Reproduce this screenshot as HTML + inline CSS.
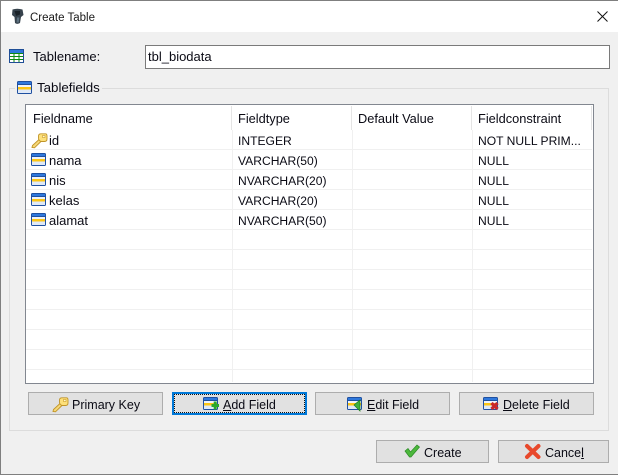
<!DOCTYPE html>
<html>
<head>
<meta charset="utf-8">
<style>
html,body{margin:0;padding:0;}
body{width:618px;height:475px;overflow:hidden;background:#f0f0f0;font-family:"Liberation Sans",sans-serif;font-size:12.5px;color:#0a0a14;position:relative;}
.l{position:absolute;}
.btn{position:absolute;background:#e1e1e1;border:1px solid #adadad;box-sizing:border-box;height:23px;}
.t{position:absolute;white-space:nowrap;line-height:16px;}
.h{font-size:12.800px;top:111px;}
svg{position:absolute;overflow:visible;}
</style>
</head>
<body>
<svg width="0" height="0" style="position:absolute">
<defs>
<g id="fld">
<rect x=".5" y=".5" width="14" height="12" rx="1" fill="#fff" stroke="#1f50a0"/>
<rect x="1" y="1" width="13" height="2" fill="#2f78dc"/>
<rect x="1" y="3" width="13" height="1" fill="#1f50a0"/>
<rect x="1" y="4" width="13" height="2" fill="#eef3fb"/>
<rect x="1" y="6" width="13" height="2.500" fill="#fcc514"/>
<rect x="1" y="8.500" width="13" height="3.500" fill="#dfe9f7"/>
</g>
<g id="key">
<path d="M1 14.500 L1.500 12.500 L8 6.500 L10 8.500 L3.500 14.800 Z" fill="#f6d878" stroke="#c09428" stroke-width=".9"/>
<path d="M7.500 3 Q7.500 .8 10 .8 L14.500 .8 Q16 .8 16 3 L16 6 Q16 8.500 13.500 8.500 L10.500 8.500 Q7.500 8 7.500 5 Z" fill="#fde07a" stroke="#c09428" stroke-width=".9"/>
<rect x="11.500" y="2.500" width="2.500" height="2" fill="#fff8d0" stroke="#c89a2a" stroke-width=".6"/>
</g>
</defs>
</svg>

<!-- window frame -->
<div class="l" style="left:0;top:0;width:618px;height:32px;background:#fff"></div>
<div class="l" style="left:0;top:0;width:618px;height:1px;background:#7f7f7f"></div>
<div class="l" style="left:0;top:0;width:1px;height:475px;background:#7f7f7f"></div>
<div class="l" style="left:0;top:474px;width:618px;height:1px;background:#7f7f7f"></div>

<!-- title icon -->
<svg style="left:11px;top:8px" width="14" height="17" viewBox="0 0 14 17">
<path d="M1.500 1.500 Q6 0 11.500 1.500 L12.500 7 L10 9 L9 15 Q6 16.800 4 15 L3.500 9 L1 7 Z" fill="#36424c"/>
<path d="M3.500 3 L9 3 L9 6.500 L5 8Z" fill="#1a2228"/>
<path d="M6 9.500 L8.300 9.500 L7.800 14.500 L5.500 14.500Z" fill="#5d7180"/>
</svg>
<div class="t" style="left:30px;top:10px;font-size:11.500px;color:#1a1a1a">Create Table</div>
<svg style="left:597px;top:11px" width="11" height="11" viewBox="0 0 11 11"><path d="M.5 .5 L10.500 10.500 M10.500 .5 L.5 10.500" stroke="#111" stroke-width="1" fill="none"/></svg>

<!-- Tablename -->
<svg style="left:9px;top:49px" width="15" height="14" viewBox="0 0 15 14">
<rect x=".5" y=".5" width="14" height="13" fill="#fff" stroke="#1f4e96"/>
<rect x="1" y="1" width="13" height="3" fill="#2f78dc"/>
<path d="M1 4.500H14M1 7.500H14M1 10.500H14M5 4V13M10 4V13" stroke="#0c8a12" stroke-width="1" fill="none"/>
<rect x=".5" y=".5" width="14" height="13" fill="none" stroke="#1f4e96"/>
</svg>
<div class="t" style="left:33px;top:49px;font-size:13px">Tablename:</div>
<div class="l" style="left:145px;top:45px;width:465px;height:24px;box-sizing:border-box;background:#fff;border:1px solid #7a7a7a"></div>
<div class="t" style="left:148px;top:49px;font-size:13px">tbl_biodata</div>

<!-- group -->
<div class="l" style="left:9px;top:88px;width:600px;height:343px;box-sizing:border-box;border:1px solid #dcdcdc"></div>
<div class="l" style="left:15px;top:80px;width:87px;height:16px;background:#f0f0f0"></div>
<svg style="left:17px;top:81px" width="15" height="13" viewBox="0 0 15 13"><use href="#fld"/></svg>
<div class="t" style="left:37px;top:80px;font-size:13.300px">Tablefields</div>

<!-- table -->
<div class="l" style="left:25px;top:104px;width:569px;height:280px;box-sizing:border-box;background:#fff;border:1px solid #828790"></div>

<!-- header separators -->
<div class="l" style="left:231px;top:106px;width:1px;height:24px;background:#e5e5e5"></div>
<div class="l" style="left:351px;top:106px;width:1px;height:24px;background:#e5e5e5"></div>
<div class="l" style="left:471px;top:106px;width:1px;height:24px;background:#e5e5e5"></div>
<div class="l" style="left:591px;top:106px;width:1px;height:24px;background:#e5e5e5"></div>

<!-- vertical grid -->
<div class="l" style="left:232px;top:130px;width:1px;height:252px;background:#f0f0f0"></div>
<div class="l" style="left:352px;top:130px;width:1px;height:252px;background:#f0f0f0"></div>
<div class="l" style="left:472px;top:130px;width:1px;height:252px;background:#f0f0f0"></div>

<!-- horizontal grid -->
<div class="l" style="left:26px;top:149px;width:566px;height:1px;background:#f0f0f0"></div>
<div class="l" style="left:26px;top:169px;width:566px;height:1px;background:#f0f0f0"></div>
<div class="l" style="left:26px;top:189px;width:566px;height:1px;background:#f0f0f0"></div>
<div class="l" style="left:26px;top:209px;width:566px;height:1px;background:#f0f0f0"></div>
<div class="l" style="left:26px;top:229px;width:566px;height:1px;background:#f0f0f0"></div>
<div class="l" style="left:26px;top:249px;width:566px;height:1px;background:#f0f0f0"></div>
<div class="l" style="left:26px;top:269px;width:566px;height:1px;background:#f0f0f0"></div>
<div class="l" style="left:26px;top:289px;width:566px;height:1px;background:#f0f0f0"></div>
<div class="l" style="left:26px;top:309px;width:566px;height:1px;background:#f0f0f0"></div>
<div class="l" style="left:26px;top:329px;width:566px;height:1px;background:#f0f0f0"></div>
<div class="l" style="left:26px;top:349px;width:566px;height:1px;background:#f0f0f0"></div>
<div class="l" style="left:26px;top:369px;width:566px;height:1px;background:#f0f0f0"></div>

<!-- headers -->
<div class="t h" style="left:33px">Fieldname</div>
<div class="t h" style="left:238px">Fieldtype</div>
<div class="t h" style="left:358px">Default Value</div>
<div class="t h" style="left:478px">Fieldconstraint</div>

<!-- rows -->
<svg style="left:31px;top:133px" width="17" height="15" viewBox="0 0 17 15"><use href="#key"/></svg>
<div class="t" style="left:49px;top:133px;font-size:13px">id</div>
<div class="t" style="left:238px;top:133px;font-size:12.100px">INTEGER</div>
<div class="t" style="left:478px;top:133px;font-size:12.100px">NOT NULL PRIM...</div>

<svg style="left:31px;top:153px" width="15" height="13" viewBox="0 0 15 13"><use href="#fld"/></svg>
<div class="t" style="left:49px;top:153px;font-size:13px">nama</div>
<div class="t" style="left:238px;top:153px;font-size:12.100px">VARCHAR(50)</div>
<div class="t" style="left:478px;top:153px;font-size:12.100px">NULL</div>

<svg style="left:31px;top:173px" width="15" height="13" viewBox="0 0 15 13"><use href="#fld"/></svg>
<div class="t" style="left:49px;top:173px;font-size:13px">nis</div>
<div class="t" style="left:238px;top:173px;font-size:12.100px">NVARCHAR(20)</div>
<div class="t" style="left:478px;top:173px;font-size:12.100px">NULL</div>

<svg style="left:31px;top:193px" width="15" height="13" viewBox="0 0 15 13"><use href="#fld"/></svg>
<div class="t" style="left:49px;top:193px;font-size:13px">kelas</div>
<div class="t" style="left:238px;top:193px;font-size:12.100px">VARCHAR(20)</div>
<div class="t" style="left:478px;top:193px;font-size:12.100px">NULL</div>

<svg style="left:31px;top:213px" width="15" height="13" viewBox="0 0 15 13"><use href="#fld"/></svg>
<div class="t" style="left:49px;top:213px;font-size:13px">alamat</div>
<div class="t" style="left:238px;top:213px;font-size:12.100px">NVARCHAR(50)</div>
<div class="t" style="left:478px;top:213px;font-size:12.100px">NULL</div>

<!-- buttons -->
<div class="btn" style="left:28px;top:392px;width:135px"></div>
<svg style="left:52px;top:397px" width="17" height="15" viewBox="0 0 17 15"><use href="#key"/></svg>
<div class="t" style="left:72px;top:397px">Primary Key</div>

<div class="btn" style="left:172px;top:392px;width:135px;border:2px solid #0078d7"></div>
<div class="l" style="left:174px;top:394px;width:131px;height:19px;box-sizing:border-box;border:1px dotted #111"></div>
<svg style="left:203px;top:397px" width="16" height="13" viewBox="0 0 16 13"><use href="#fld"/><path d="M8.500 8.500H16M12.200 4.500V12.500" stroke="#2aa82a" stroke-width="3" fill="none"/></svg>
<div class="t" style="left:223px;top:397px"><u>A</u>dd Field</div>

<div class="btn" style="left:315px;top:392px;width:135px"></div>
<svg style="left:347px;top:397px" width="16" height="14" viewBox="0 0 16 14"><use href="#fld"/><path d="M7 8 L13 3 L13 14 Z" fill="#3fb03f" stroke="#1d7a1d" stroke-width=".7"/></svg>
<div class="t" style="left:367px;top:397px"><u>E</u>dit Field</div>

<div class="btn" style="left:459px;top:392px;width:135px"></div>
<svg style="left:483px;top:397px" width="16" height="14" viewBox="0 0 16 14"><use href="#fld"/><path d="M8.500 6L14.500 12M14.500 6L8.500 12" stroke="#c8272a" stroke-width="3.200" fill="none"/></svg>
<div class="t" style="left:503px;top:397px"><u>D</u>elete Field</div>

<div class="btn" style="left:376px;top:440px;width:113px"></div>
<svg style="left:404px;top:444px" width="16" height="14" viewBox="0 0 16 14"><path d="M1 7 L4 4.500 L6.500 8 L13 1 L15.500 3 L7 13 L5.500 13 Z" fill="#4cb83c" stroke="#2c8a26" stroke-width=".7"/></svg>
<div class="t" style="left:424px;top:445px">Create</div>

<div class="btn" style="left:498px;top:440px;width:111px"></div>
<svg style="left:525px;top:443px" width="16" height="16" viewBox="0 0 16 16"><path d="M2 3L13.500 14M13.500 3L2 14" stroke="#e8492c" stroke-width="4" fill="none" stroke-linecap="round"/></svg>
<div class="t" style="left:545px;top:445px">Cance<u>l</u></div>
</body>
</html>
